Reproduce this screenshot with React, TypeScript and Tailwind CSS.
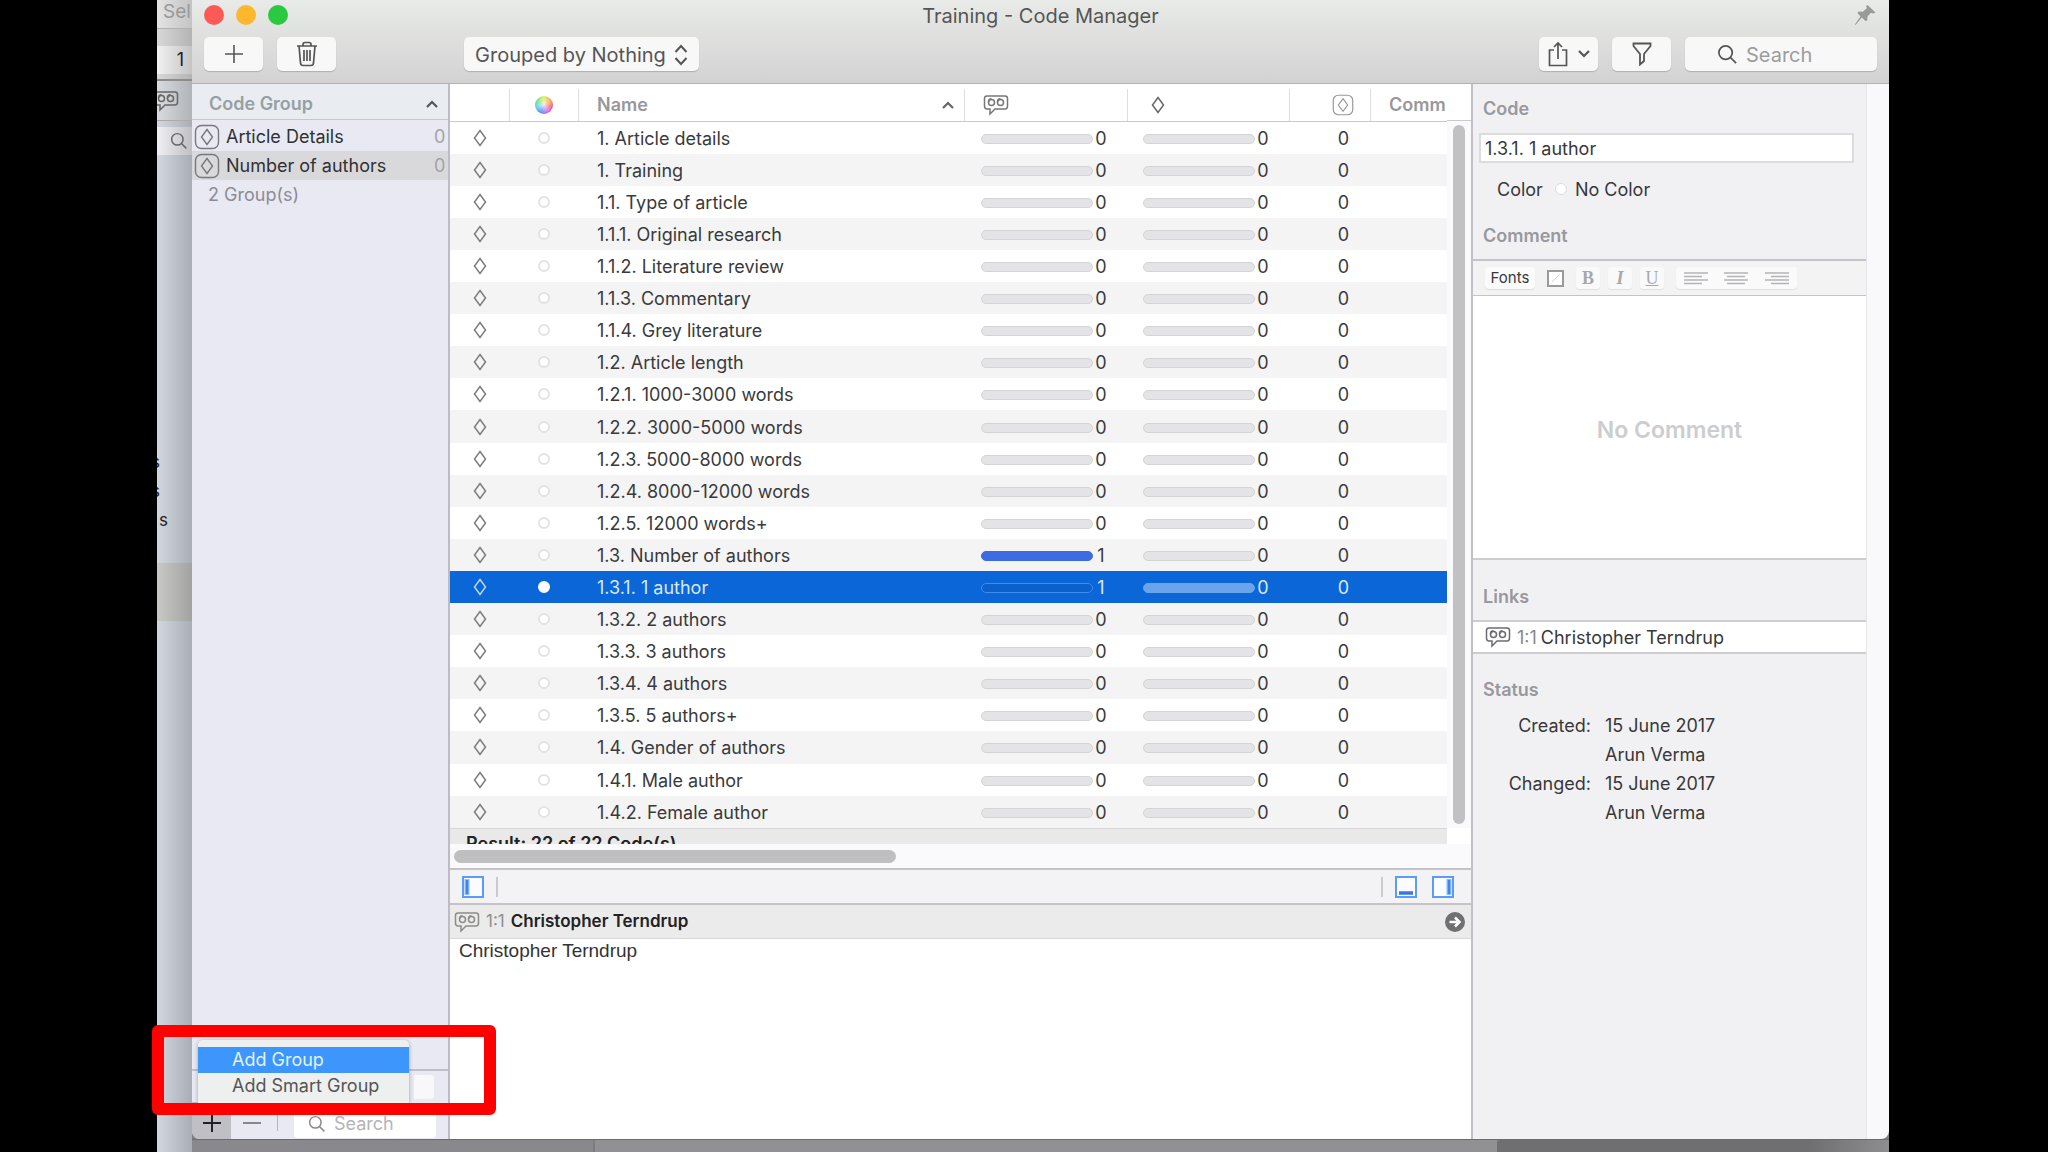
import React from "react";

type Code = { name: string; quotes?: number; selected?: boolean };

const codes: Code[] = [
  { name: "1. Article details" },
  { name: "1. Training" },
  { name: "1.1. Type of article" },
  { name: "1.1.1. Original research" },
  { name: "1.1.2. Literature review" },
  { name: "1.1.3. Commentary" },
  { name: "1.1.4. Grey literature" },
  { name: "1.2. Article length" },
  { name: "1.2.1. 1000-3000 words" },
  { name: "1.2.2. 3000-5000 words" },
  { name: "1.2.3. 5000-8000 words" },
  { name: "1.2.4. 8000-12000 words" },
  { name: "1.2.5. 12000 words+" },
  { name: "1.3. Number of authors", quotes: 1 },
  { name: "1.3.1. 1 author", quotes: 1, selected: true },
  { name: "1.3.2. 2 authors" },
  { name: "1.3.3. 3 authors" },
  { name: "1.3.4. 4 authors" },
  { name: "1.3.5. 5 authors+" },
  { name: "1.4. Gender of authors" },
  { name: "1.4.1. Male author" },
  { name: "1.4.2. Female author" },
];

const toolButton =
  "flex h-[34px] items-center justify-center rounded-[5px] bg-[#f8f8f8] text-[#555] shadow-[0_1px_1px_rgba(0,0,0,0.18)]";

function Diamond({ className = "" }: { className?: string }) {
  return (
    <svg viewBox="0 0 16 20" className={`h-5 w-4 ${className}`} fill="none" stroke="currentColor" strokeWidth="1.5">
      <path d="M8 2.500 13.500 10 8 17.500 2.500 10Z" />
    </svg>
  );
}

function BoxedDiamond({ className = "" }: { className?: string }) {
  return (
    <svg viewBox="0 0 26 26" className={className} fill="none" stroke="currentColor" strokeWidth="1.4">
      <rect x="1.5" y="1.5" width="23" height="23" rx="6" />
      <path d="M13 5.500 18.500 13 13 20.500 7.500 13Z" />
    </svg>
  );
}

function Quote({ className = "" }: { className?: string }) {
  return (
    <svg viewBox="0 0 26 22" className={`h-[22px] w-[26px] ${className}`} fill="none" stroke="currentColor" strokeWidth="1.5">
      <path d="M4 2H22Q24.500 2 24.500 4.500V12Q24.500 15 22 15H12L7 20V15H4Q1.500 15 1.500 12V4.500Q1.500 2 4 2Z" />
      <circle cx="8.500" cy="8.500" r="3" />
      <circle cx="17.500" cy="8.500" r="3" />
      <path d="M5.500 8Q5.500 5 8.500 4.800M14.500 8Q14.500 5 17.500 4.800" />
    </svg>
  );
}

function Magnifier({ className = "" }: { className?: string }) {
  return (
    <svg viewBox="0 0 22 22" className={className} fill="none" stroke="currentColor" strokeWidth="1.8">
      <circle cx="9" cy="9" r="7" />
      <path d="M14 14 20 20" />
    </svg>
  );
}

function Chevron({ className = "" }: { className?: string }) {
  return (
    <svg viewBox="0 0 12 8" className={`h-2 w-3 ${className}`} fill="none" stroke="currentColor" strokeWidth="2.200">
      <path d="M1 7 6 2 11 7" />
    </svg>
  );
}

function PanelIcon({ side }: { side: "left" | "bottom" | "right" }) {
  return (
    <svg viewBox="0 0 22 22" className="size-[22px]" fill="none">
      <rect x="1" y="1" width="20" height="20" fill="#fafcff" stroke="#5a9cf8" strokeWidth="2" />
      {side === "left" && <path d="M5 3V19" stroke="#8fc0fb" strokeWidth="5" />}
      {side === "left" && <path d="M5 4V18" stroke="#3f84f0" strokeWidth="2.500" />}
      {side === "bottom" && <path d="M4 17H18" stroke="#3f74e0" strokeWidth="3.500" />}
      {side === "right" && <path d="M17 3V19" stroke="#8fc0fb" strokeWidth="5" />}
      {side === "right" && <path d="M17 4V18" stroke="#3f84f0" strokeWidth="2.500" />}
    </svg>
  );
}

function TitleBar() {
  return (
    <header className="h-[84px] shrink-0 border-b border-[#b4b4b4] bg-linear-to-b from-[#e9ebe8] to-[#d2d2d2]">
      <div className="grid h-[30px] grid-cols-[1fr_auto_1fr] items-center pr-3 pl-3">
        <div className="flex gap-3">
          <button aria-label="Close" className="size-5 rounded-full bg-[#fb5a55]" />
          <button aria-label="Minimize" className="size-5 rounded-full bg-[#fdb72f]" />
          <button aria-label="Zoom" className="size-5 rounded-full bg-[#29c940]" />
        </div>
        <h1 className="pt-0.5 text-[20px] leading-6 text-[#555]">Training - Code Manager</h1>
        <button aria-label="Pin window" className="justify-self-end text-[#9a9a9a]">
          <svg viewBox="0 0 24 24" className="size-6" fill="currentColor">
            <path d="M14.500 2 22.500 9.500 20 10.500 18 9.800 14.500 13.500 14.300 17.500 12.500 18 8.800 14.600 2.500 22 1.800 21.400 7.500 13.400 4.500 10 5.500 8.500 9.800 8.700 13.800 5.300 13.200 3Z" />
          </svg>
        </button>
      </div>
      <div className="flex h-[48px] items-center pr-3 pl-3">
        <button aria-label="Add code" className={`${toolButton} w-[59px]`}>
          <svg viewBox="0 0 18 18" className="size-[18px]" stroke="currentColor" strokeWidth="1.600">
            <path d="M9 0V18M0 9H18" />
          </svg>
        </button>
        <button aria-label="Delete code" className={`${toolButton} ml-3.5 w-[59px]`}>
          <svg viewBox="0 0 22 26" className="h-[26px] w-[22px]" fill="none" stroke="currentColor" strokeWidth="1.700">
            <path d="M1 5H21M7 5V3.500Q7 1.500 9 1.500H13Q15 1.500 15 3.500V5M3 5 4.500 22Q4.800 24.500 7 24.500H15Q17.200 24.500 17.500 22L19 5M8 9V20M11 9V20M14 9V20" />
          </svg>
        </button>
        <button className={`${toolButton} ml-32 w-[235px] gap-2 pt-0.5 text-[20px]`}>
          Grouped by Nothing
          <svg viewBox="0 0 14 22" className="h-[22px] w-3.5" fill="none" stroke="currentColor" strokeWidth="2">
            <path d="M1.500 8 7 2 12.500 8M1.500 14 7 20 12.500 14" />
          </svg>
        </button>
        <div className="ml-auto flex gap-3.5">
          <button aria-label="Share" className={`${toolButton} w-[59px] gap-2.5`}>
            <svg viewBox="0 0 20 26" className="h-[26px] w-5" fill="none" stroke="currentColor" strokeWidth="1.700">
              <path d="M6 9H1.500V24.500H18.500V9H14M10 18V2M6 6 10 2 14 6" />
            </svg>
            <Chevron className="rotate-180" />
          </button>
          <button aria-label="Filter" className={`${toolButton} w-[59px]`}>
            <svg viewBox="0 0 20 24" className="h-6 w-5" fill="none" stroke="currentColor" strokeWidth="1.800">
              <path d="M1.500 1.500H18.500V4L12 12V19L8 22.500V12L1.500 4Z" />
            </svg>
          </button>
          <label className={`${toolButton} w-[192px] gap-2 pl-8`}>
            <Magnifier className="size-[21px] shrink-0" />
            <input aria-label="Search codes" placeholder="Search" className="w-full min-w-0 bg-transparent pt-0.5 text-[20px] outline-none placeholder:text-[#9c9c9c]" />
          </label>
        </div>
      </div>
    </header>
  );
}

function GroupSidebar() {
  const groups = [
    { name: "Article Details", selected: false },
    { name: "Number of authors", selected: true },
  ];
  return (
    <aside className="flex w-[258px] shrink-0 flex-col rounded-bl-[8px] border-r-2 border-[#bcbcc2] bg-[#e8e9f3]">
      <div className="flex h-9 items-center justify-between border-b border-[#c4c7cc] bg-[#e9edf1] pt-1 pr-2.5 pl-[17px]">
        <h2 className="text-[18px] font-semibold text-[#96a0a2]">Code Group</h2>
        <Chevron className="text-[#555]" />
      </div>
      <ul className="pt-0.5">
        {groups.map((g) => (
          <li key={g.name} className={`flex h-[29px] items-center px-0.5 ${g.selected ? "bg-[#d9d9dc]" : ""}`}>
            <BoxedDiamond className="size-[26px] text-[#77797d]" />
            <span className="ml-1.5 flex-1 text-[18px] text-[#303134]">{g.name}</span>
            <span className="w-3 text-[18px] text-[#a3a3a8]">0</span>
          </li>
        ))}
      </ul>
      <p className="flex h-[29px] items-center pl-4 text-[18px] text-[#8c8c92]">2 Group(s)</p>
      <div className="relative mt-auto">
        <div className="flex h-[33px] items-center justify-end border-t-2 border-[#c0c0c8] pr-3.5">
          <span className="h-6 w-5 rounded-r-[4px] bg-[#f8f8fb]" />
        </div>
        <div className="flex h-[37px] items-center">
          <button aria-label="Add group" className="flex h-full w-[39px] items-center justify-center rounded-bl-[8px] bg-[#bfbfc5] pt-1 text-[#222]">
            <svg viewBox="0 0 18 18" className="size-[18px]" stroke="currentColor" strokeWidth="2">
              <path d="M9 0V18M0 9H18" />
            </svg>
          </button>
          <button aria-label="Remove group" className="ml-3 flex h-full w-[18px] items-center justify-center pt-1 text-[#888]">
            <svg viewBox="0 0 18 4" className="h-1 w-[18px]" stroke="currentColor" strokeWidth="2">
              <path d="M0 2H18" />
            </svg>
          </button>
          <span className="mt-1 ml-4 h-4 w-px bg-[#b5b5bb]" />
          <label className="mt-1.5 ml-4 flex h-7 w-[142px] items-center gap-2 rounded-[4px] bg-white pl-3.5 text-[#888]">
            <Magnifier className="size-[18px] shrink-0" />
            <input aria-label="Search groups" placeholder="Search" className="w-full min-w-0 bg-transparent text-[18px] outline-none placeholder:text-[#b4b4b8]" />
          </label>
        </div>
        <div role="menu" className="absolute bottom-9 left-1.5 w-[211px] rounded-t-[5px] bg-[#eef0f0] pt-[7px] pb-1 text-[18px] shadow-[0_1px_4px_rgba(0,0,0,0.3)]">
          <button role="menuitem" className="block h-[26px] w-full bg-[#3c96fb] pl-[34px] text-left leading-[26px] text-[#e3f1ff]">Add Group</button>
          <button role="menuitem" className="block h-[26px] w-full pl-[34px] text-left leading-[26px] text-[#555]">Add Smart Group</button>
        </div>
        <div className="absolute -left-10 bottom-6 h-[90px] w-[344px] rounded-[6px] border-12 border-[#fe0000]" />
      </div>
    </aside>
  );
}

function Meter({ value, label, tone }: { value: number; label: string; tone: string }) {
  return (
    <div className="flex items-center gap-0.5">
      <span className={`h-2.5 w-[112px] rounded-full border ${tone}`} role="img" aria-label={label} />
      <span className="w-3 text-center">{value}</span>
    </div>
  );
}

const idle = "border-[#d4d4d6] bg-[#e4e4e6]";

function CodeTable() {
  const th = "border-b border-[#cacace] p-0 text-left align-bottom";
  const sep = "h-8 border-l border-[#dedee2]";
  return (
    <div className="flex bg-[#fafafc]">
      <table className="h-[744px] flex-1 table-fixed border-collapse text-[18px] leading-6 text-[#3a3a3c]">
        <colgroup>
          <col className="w-[59px]" />
          <col className="w-[69px]" />
          <col />
          <col className="w-[163px]" />
          <col className="w-[162px]" />
          <col className="w-[81px]" />
          <col className="w-[77px]" />
        </colgroup>
        <thead>
          <tr className="h-[37px] bg-white">
            <th className={th} aria-label="Kind" />
            <th className={th} aria-label="Color">
              <div className={`flex items-center justify-center ${sep}`}>
                <span className="size-[18px] rounded-full bg-[radial-gradient(circle,#ffffffcc_0%,#ffffff00_75%),conic-gradient(#d8ee5a,#ff9f4a,#f0506a,#c060f0,#5080f8,#50c8f0,#70e070,#d8ee5a)]" />
              </div>
            </th>
            <th className={th}>
              <div className={`flex items-center justify-between pr-2.5 pl-[18px] font-semibold text-[#97979c] ${sep}`}>
                Name
                <Chevron className="text-[#666]" />
              </div>
            </th>
            <th className={th} aria-label="Quotations">
              <div className={`flex items-center pl-[18px] text-[#777] ${sep}`}><Quote /></div>
            </th>
            <th className={th} aria-label="Codes">
              <div className={`flex items-center pl-[22px] text-[#666] ${sep}`}><Diamond /></div>
            </th>
            <th className={th} aria-label="Groups">
              <div className={`flex items-center justify-end pr-4 text-[#999] ${sep}`}><BoxedDiamond className="size-[22px]" /></div>
            </th>
            <th className={th}>
              <div className={`flex items-center pl-[18px] font-semibold text-[#97979c] ${sep}`}>Comm</div>
            </th>
          </tr>
        </thead>
        <tbody>
          {codes.map((c, i) => {
            const row = c.selected ? "bg-[#0b66d8] text-[#d7e9ff]" : i % 2 ? "bg-[#f4f4f5]" : "bg-white";
            const quoteTone = c.selected ? "border-[#3d8cf0] bg-[#0b60cc]" : c.quotes ? "border-[#3c6ce0] bg-[#3c6ce0]" : idle;
            return (
              <tr key={c.name} className={row} aria-selected={!!c.selected}>
                <td className="p-0">
                  <Diamond className={`mx-auto ${c.selected ? "text-[#b9d8ff]" : "text-[#7c7c80]"}`} />
                </td>
                <td className="p-0">
                  <span className={`mx-auto block size-3 rounded-full border-2 bg-white ${c.selected ? "border-white" : "border-[#e2e2e4]"}`} />
                </td>
                <td className="p-0 pt-0.5 pl-[19px]">{c.name}</td>
                <td className="p-0 pt-0.5 pl-[17px]">
                  <Meter value={c.quotes ?? 0} label="Quotation share" tone={quoteTone} />
                </td>
                <td className="p-0 pt-0.5 pl-4">
                  <Meter value={0} label="Code share" tone={c.selected ? "border-[#6ba4ea] bg-[#6ba4ea]" : idle} />
                </td>
                <td className="p-0 pt-0.5 pl-7 text-center">0</td>
                <td />
              </tr>
            );
          })}
        </tbody>
      </table>
      <div className="flex w-[24px] flex-col">
        <div className="h-[37px] border-b border-[#cacace] bg-white" />
        <div className="mx-auto mt-1 mb-1 w-3 flex-1 rounded-full bg-[#c1c1c3]" />
      </div>
    </div>
  );
}

function CenterPane() {
  return (
    <main className="flex min-w-0 flex-1 flex-col bg-white">
      <CodeTable />
      <div className="mr-6 h-4 overflow-hidden border-t border-[#d8d8da] bg-[#e9e9ea] pt-[5px] pl-4">
        <p className="text-[18px] leading-[20px] font-semibold text-[#222]">Result: 22 of 22 Code(s)</p>
      </div>
      <div className="flex h-6 items-center bg-[#fafafc] pl-1">
        <div className="h-[13px] w-[442px] rounded-full bg-[#bfbfc1]" />
      </div>
      <div className="flex h-[37px] items-center border-y-2 border-[#c4c4c7] bg-[#f3f3f5] pr-[17px] pl-3">
        <button aria-label="Toggle left panel"><PanelIcon side="left" /></button>
        <span className="ml-3 h-5 w-0.5 bg-[#cbcbcf]" />
        <span className="ml-auto h-5 w-0.5 bg-[#cbcbcf]" />
        <button aria-label="Toggle bottom panel" className="ml-3"><PanelIcon side="bottom" /></button>
        <button aria-label="Toggle right panel" className="ml-[15px]"><PanelIcon side="right" /></button>
      </div>
      <div className="flex h-[34px] items-center border-b border-[#d8d8da] bg-[#ebebec] pr-1.5 pl-1 text-[17px]">
        <Quote className="text-[#8c8c88]" />
        <span className="ml-1.5 text-[#8e8e92]">1:1</span>
        <span className="ml-1.5 font-semibold text-[#222]">Christopher Terndrup</span>
        <button aria-label="Go to quotation" className="ml-auto">
          <svg viewBox="0 0 20 20" className="size-5" fill="none">
            <circle cx="10" cy="10" r="10" fill="#707072" />
            <path d="M4.500 10H14M10 5.500 14.500 10 10 14.500" stroke="#fff" strokeWidth="2.500" />
          </svg>
        </button>
      </div>
      <p className="px-[9px] font-['Liberation_Sans'] text-[19px] leading-6 text-[#333]">Christopher Terndrup</p>
    </main>
  );
}

function AlignIcon({ d }: { d: string }) {
  return (
    <svg viewBox="0 0 24 14" className="h-3.5 w-6" stroke="#b4b4b6" strokeWidth="1.500">
      <path d={d} />
    </svg>
  );
}

function Inspector() {
  const heading = "pl-2.5 text-[18px] leading-6 font-semibold text-[#98989e]";
  const fmt = "flex h-[22px] w-6 items-center justify-center rounded-[3px] bg-[#f9f9fa] font-['Liberation_Serif'] text-[18px] text-[#a8a8aa] shadow-[0_1px_1px_rgba(0,0,0,0.08)]";
  const status = [
    ["Created:", "15 June 2017"],
    ["", "Arun Verma"],
    ["Changed:", "15 June 2017"],
    ["", "Arun Verma"],
  ];
  return (
    <aside className="flex w-[418px] shrink-0 rounded-br-[8px] border-l-2 border-[#c0c0c6] bg-[#f9f9fc] text-[18px] text-[#38383a]">
      <div className="flex flex-1 flex-col border-r border-[#e6e6ea] bg-[#f1f1f3]">
        <h2 className={`${heading} mt-[13px]`}>Code</h2>
        <input aria-label="Code name" defaultValue="1.3.1. 1 author" className="mt-3 mr-3 ml-1.5 h-[30px] border-2 border-[#dcdcdf] bg-white px-1 outline-none" />
        <div className="mt-3.5 flex h-6 items-center pl-6">
          <span>Color</span>
          <span className="mr-2 ml-3 size-3 rounded-full border border-[#dcdcde] bg-white" />
          <span>No Color</span>
        </div>
        <h2 className={`${heading} mt-[23px]`}>Comment</h2>
        <div className="mt-[11px] flex h-[37px] items-center border-t-2 border-b border-[#c4c4c8] bg-[#f3f3f4] pl-3">
          <button className="h-[22px] w-[50px] rounded-[4px] bg-[#fbfbfb] text-[15px] shadow-[0_1px_1px_rgba(0,0,0,0.1)]">Fonts</button>
          <button aria-label="Text color" className="ml-3 flex size-[17px] items-center justify-center border-2 border-[#9a9a9c] bg-white">
            <svg viewBox="0 0 10 10" className="size-2.5" stroke="#d4d4d4"><path d="M1 9 9 1" /></svg>
          </button>
          <button aria-label="Bold" className={`${fmt} ml-3 font-bold`}>B</button>
          <button aria-label="Italic" className={`${fmt} ml-2 font-bold italic`}>I</button>
          <button aria-label="Underline" className={`${fmt} ml-2 underline`}>U</button>
          <div className="ml-3 flex h-[22px] w-[121px] items-center justify-around rounded-[4px] bg-[#fafafb] shadow-[0_1px_1px_rgba(0,0,0,0.08)]">
            <button aria-label="Align left"><AlignIcon d="M0 2H24M0 5.500H18M0 9H24M0 12.500H18" /></button>
            <button aria-label="Align center"><AlignIcon d="M0 2H24M3 5.500H21M0 9H24M3 12.500H21" /></button>
            <button aria-label="Align right"><AlignIcon d="M0 2H24M6 5.500H24M0 9H24M6 12.500H24" /></button>
          </div>
        </div>
        <textarea aria-label="Comment" placeholder="No Comment" className="h-[264px] resize-none border-b-2 border-[#cdcdd0] bg-white pt-[118px] text-center text-[23px] leading-8 font-semibold outline-none placeholder:text-[#cdcdcf]" />
        <h2 className={`${heading} mt-[25px]`}>Links</h2>
        <a href="#link" className="mt-[11px] flex h-[34px] items-center border-y-2 border-[#cdcdd0] bg-white pl-3">
          <Quote className="text-[#6c6c70]" />
          <span className="ml-1.5 text-[#88888c]">1:1</span>
          <span className="ml-1">Christopher Terndrup</span>
        </a>
        <h2 className={`${heading} mt-[24px]`}>Status</h2>
        <dl className="mt-[9px] grid grid-cols-[118px_1fr] gap-x-3.5">
          {status.map(([k, v], i) => (
            <React.Fragment key={i}>
              <dt className="h-[29px] text-right leading-[29px]">{k}</dt>
              <dd className="leading-[29px]">{v}</dd>
            </React.Fragment>
          ))}
        </dl>
      </div>
      <div className="w-[22px]" />
    </aside>
  );
}

function BackWindow() {
  return (
    <div className="flex w-[35px] shrink-0 flex-col overflow-hidden bg-linear-to-r from-[#d3d8e0] to-[#a9adb5] text-[18px] text-[#222]">
      <div className="h-[29px] border-b border-[#b0b0b0] bg-linear-to-r from-[#e4e4e4] to-[#c4c4c4] pl-1.5 text-[19px] leading-6 text-[#999]">Sel</div>
      <div className="flex h-[52px] flex-col justify-center border-b-2 border-[#8c8c8c] bg-linear-to-r from-[#d8d8d8] to-[#b4b4b4]">
        <span className="mt-3 bg-linear-to-r from-[#f2f2f2] to-[#c4c4c4] pr-2 text-right leading-7">1</span>
      </div>
      <div className="flex h-10 items-center border-b border-[#aaa] bg-linear-to-r from-[#d8dce0] to-[#b0b4b8]">
        <Quote className="-ml-1 text-[#666]" />
      </div>
      <div className="mt-1.5 flex h-7 items-center justify-end bg-linear-to-r from-[#f0f0f4] to-[#c0c0c4] pr-1 text-[#666]">
        <Magnifier className="size-[18px]" />
      </div>
      <div className="mt-[293px] flex flex-col text-[17px] leading-[29px]">
        <span className="-ml-1.5">s</span>
        <span className="-ml-1.5">s</span>
        <span className="ml-0.5">s</span>
      </div>
      <div className="mt-[28px] h-[58px] bg-linear-to-r from-[#c9cac6] to-[#a2a3a1]" />
    </div>
  );
}

export default function App() {
  return (
    <div className="flex h-screen overflow-hidden bg-black pr-[159px] pl-[157px] font-['Inter',sans-serif]">
      <BackWindow />
      <div className="flex min-w-0 flex-1 flex-col bg-[#808083]">
        <div className="flex min-h-0 flex-1 flex-col">
          <TitleBar />
          <div className="flex min-h-0 flex-1">
            <GroupSidebar />
            <CenterPane />
            <Inspector />
          </div>
        </div>
        <div className="flex h-[13px] shrink-0 border-t border-[#6c6c6e]">
          <div className="w-[403px] border-r-2 border-[#7c7c80] bg-[#89898d]" />
          <div className="flex-1 bg-[#919193]" />
          <div className="w-[392px] rounded-tl-[4px] bg-linear-to-r from-[#6f6f71] from-80% to-[#8e8e90]" />
        </div>
      </div>
    </div>
  );
}
